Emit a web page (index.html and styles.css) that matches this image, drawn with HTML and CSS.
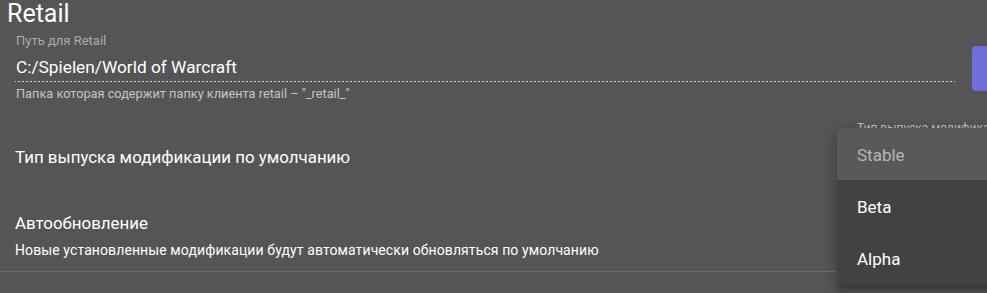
FILE: index.html
```html
<!DOCTYPE html>
<html lang="ru">
<head>
<meta charset="utf-8">
<title>Retail</title>
<link rel="stylesheet" href="styles.css">
</head>
<body>
<div class="page">
  <h1 class="title">Retail</h1>
  <div class="path-row">
    <div class="field">
      <div class="field-label">Путь для Retail</div>
      <div class="field-value">C:/Spielen/World of Warcraft</div>
      <div class="field-hint">Папка которая содержит папку клиента retail – "_retail_"</div>
    </div>
    <div class="browse-btn"></div>
  </div>
  <div class="setting setting-select">
    <div class="setting-title">Тип выпуска модификации по умолчанию</div>
    <div class="select">
      <div class="select-label">Тип выпуска модификации по умолчанию</div>
      <ul class="menu">
        <li class="menu-item is-selected">Stable</li>
        <li class="menu-item">Beta</li>
        <li class="menu-item">Alpha</li>
      </ul>
    </div>
  </div>
  <div class="setting setting-auto">
    <div class="setting-title">Автообновление</div>
    <div class="setting-desc">Новые установленные модификации будут автоматически обновляться по умолчанию</div>
  </div>
</div>
</body>
</html>
```
FILE: styles.css
```css
html, body {
  margin: 0;
  padding: 0;
  background: #555555;
  overflow: hidden;
}
body {
  width: 987px;
  height: 293px;
  font-family: Roboto, "Liberation Sans", Arial, sans-serif;
  color: #ffffff;
}
.page {
  display: flex;
  flex-direction: column;
}
.title {
  margin: 0;
  padding-left: 7px;
  font-size: 25px;
  font-weight: 400;
  line-height: 28px;
  height: 28px;
}
.path-row {
  display: flex;
  gap: 17px;
  padding-left: 14px;
  margin-top: 6px;
}
.field {
  flex: 0 0 941px;
  display: flex;
  flex-direction: column;
}
.field-label {
  padding-left: 2px;
  font-size: 13px;
  line-height: 14px;
  color: #ababab;
}
.field-value {
  padding: 9px 0 4px 2px;
  font-size: 17.3px;
  line-height: 20px;
  color: #ffffff;
  border-bottom: 1px solid transparent;
  border-image: repeating-linear-gradient(to right, rgba(255,255,255,0.7) 0, rgba(255,255,255,0.7) 2px, transparent 2px, transparent 4px) 1 repeat;
}
.field-hint {
  margin-top: 5px;
  padding-left: 2px;
  font-size: 12.75px;
  line-height: 14px;
  color: #c4c4c4;
}
.browse-btn {
  flex: 0 0 64px;
  height: 45px;
  margin-top: 12px;
  background: #6f6fd9;
  border-radius: 4px;
}
.setting {
  display: flex;
  padding-left: 15px;
}
.setting-select {
  align-items: center;
  padding-top: 16px;
}
.setting-title {
  font-size: 16.9px;
  line-height: 20px;
  color: #ffffff;
}
.select {
  position: relative;
  margin-left: auto;
  width: 150px;
  height: 80px;
  padding-left: 20px;
  box-sizing: border-box;
  white-space: nowrap;
  overflow: visible;
}
.select-label {
  padding-top: 4px;
  font-size: 12px;
  line-height: 14px;
  color: #bdbdbd;
  overflow: hidden;
}
.menu {
  position: absolute;
  left: 0;
  top: 11px;
  width: 170px;
  margin: 0;
  padding: 0;
  list-style: none;
  background: #424242;
  border-radius: 4px;
  box-shadow: 0 5px 5px -3px rgba(0,0,0,0.2), 0 8px 10px 1px rgba(0,0,0,0.14), 0 3px 14px 2px rgba(0,0,0,0.12);
  overflow: hidden;
}
.menu-item {
  box-sizing: border-box;
  height: 52px;
  line-height: 50px;
  padding-top: 2px;
  padding-left: 20px;
  font-size: 17px;
  color: #ffffff;
}
.menu-item:last-child {
  height: 53px;
}
.menu-item.is-selected {
  background: #595959;
  color: #b5b5b5;
}
.setting-auto {
  flex-direction: column;
  padding-top: 16px;
  padding-bottom: 12px;
  border-bottom: 1px solid #6b6b6b;
}
.setting-desc {
  margin-top: 8px;
  font-size: 14px;
  letter-spacing: 0.1px;
  line-height: 18px;
  color: #ffffff;
}
```
